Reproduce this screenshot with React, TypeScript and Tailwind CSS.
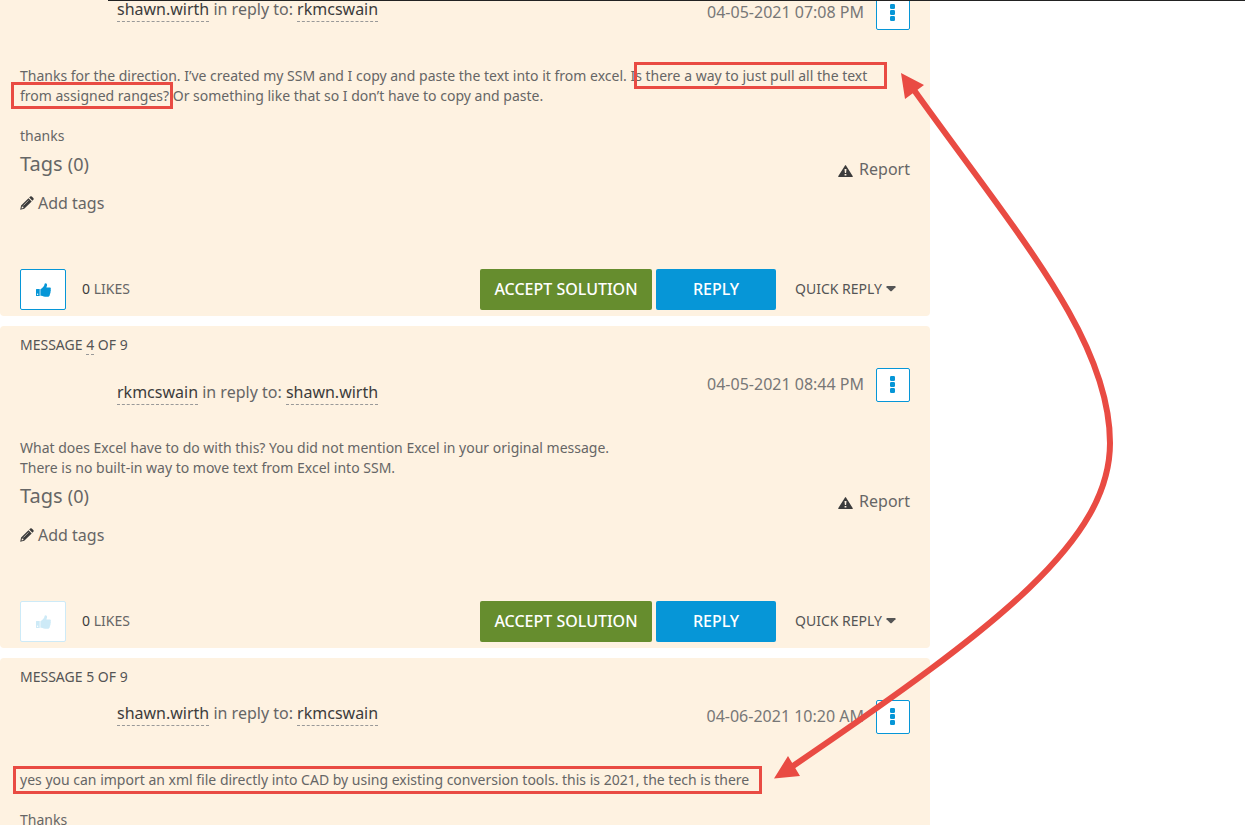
import React from 'react';
import clsx from 'clsx';

interface Message {
  id: number;
  author: string;
  replyTo: string;
  date: string;
  body: string;
  linked?: boolean;
  hideNumber?: boolean;
  hideFooter?: boolean;
  likeDisabled?: boolean;
}

const messages: Message[] = [
  {
    id: 3,
    author: 'shawn.wirth',
    replyTo: 'rkmcswain',
    date: '04-05-2021 07:08 PM',
    body: 'Thanks for the direction. I’ve created my SSM and I copy and paste the text into it from excel. Is there a way to just pull all the text\nfrom assigned ranges? Or something like that so I don’t have to copy and paste.\n\nthanks',
    hideNumber: true,
  },
  {
    id: 4,
    author: 'rkmcswain',
    replyTo: 'shawn.wirth',
    date: '04-05-2021 08:44 PM',
    body: 'What does Excel have to do with this? You did not mention Excel in your original message.\nThere is no built-in way to move text from Excel into SSM.',
    linked: true,
    likeDisabled: true,
  },
  {
    id: 5,
    author: 'shawn.wirth',
    replyTo: 'rkmcswain',
    date: '04-06-2021 10:20 AM',
    body: 'yes you can import an xml file directly into CAD by using existing conversion tools. this is 2021, the tech is there\n\nThanks',
    hideFooter: true,
  },
];

const ThumbIcon: React.FC = () => (
  <svg width="15" height="14" viewBox="0 0 15 14" fill="currentColor">
    <path
      fillRule="evenodd"
      d="M.5 6H3.7V13H.5Q0 13 0 12.5V6.5Q0 6 .5 6ZM1.6 10.6A.7.7 0 1 0 1.6 12A.7.7 0 1 0 1.6 10.6Z"
    />
    <path d="M4.4 6.2C6 5.6 7.6 4 8.2 2.6C8.5 1.7 8.5 .2 9.5 .2C10.8 .2 11.2 1.3 11 2.4C10.9 3.2 10.4 3.8 10.4 4.5H13.6C14.8 4.5 15.2 5.7 14.6 6.6C15 7.3 14.9 8.2 14.4 8.8C14.7 9.6 14.4 10.4 13.9 10.9C14 12.6 13.2 13.7 11.4 13.8C8.8 14 7 13.2 5.4 12.8L4.4 12.7Z" />
  </svg>
);

const WarningIcon: React.FC = () => (
  <svg className="mt-1 text-[#3c3c3c]" width="15" height="12" viewBox="0 0 15 12" fill="currentColor">
    <path
      fillRule="evenodd"
      d="M7 .4Q7.5-.3 8 .4L14.8 11.2Q15.1 12 14.3 12H.7Q-.1 12 .2 11.2ZM6.5 4L6.9 8H8.1L8.5 4ZM6.6 9V10.5H8.4V9Z"
    />
  </svg>
);

const PencilIcon: React.FC = () => (
  <svg className="text-[#3c3c3c]" width="14" height="14" viewBox="0 0 14 14" fill="currentColor">
    <path d="M9.2 1.5L10.2 .6Q11 -.1 11.8 .6L13.3 2.1Q14.1 3 13.3 3.8L12.4 4.7Z" />
    <path fillRule="evenodd" d="M8.5 2.2L11.7 5.4L4.2 12.8L.2 13.7L1.1 9.6ZM1.9 10.6L1.5 12.4L3.3 12L3.4 10.8Z" />
    <path d="M3.4 9.5L8.5 4.4" stroke="#fef2e1" strokeWidth=".6" />
  </svg>
);

const UserLink: React.FC<{ name: string }> = ({ name }) => (
  <a href="#" className="inline-block border-b border-dashed border-[#999] pb-px leading-[22px] text-[#3c3c3c]">
    {name}
  </a>
);

const MessageCard: React.FC<{ message: Message }> = ({ message }) => {
  const { id, author, replyTo, date, body, linked, hideNumber, hideFooter, likeDisabled } = message;

  return (
    <article className={clsx('rounded bg-[#fef2e1] px-5 pb-1.5', hideNumber ? '-mt-1' : 'pt-[9px]')}>
      {!hideNumber && (
        <p className="mb-[13px] text-sm text-[#555]">
          MESSAGE{' '}
          {linked ? (
            <a href="#" className="border-b border-dashed border-[#999]">
              {id}
            </a>
          ) : (
            id
          )}{' '}
          OF 9
        </p>
      )}

      <header className="flex h-[37px] items-start justify-between">
        <p className={clsx('pl-[97px] text-base leading-[22px]', linked ? 'self-end' : 'pt-0.5')}>
          <UserLink name={author} /> in reply to: <UserLink name={replyTo} />
        </p>
        <div className="flex items-center gap-3">
          <time className="pb-0.5 text-base text-[#777]">{date}</time>
          <button
            aria-label="Message options"
            className="flex h-[34px] w-[34px] items-center justify-center rounded-xs border border-[#0696d7] bg-white pr-0.5 pb-0.5 text-[#0696d7]"
          >
            <svg width="5" height="17" viewBox="0 0 5 17" fill="currentColor">
              <rect width="5" height="5" rx="1.2" />
              <rect y="6" width="5" height="5" rx="1.2" />
              <rect y="12" width="5" height="5" rx="1.2" />
            </svg>
          </button>
        </div>
      </header>

      <p className="mt-[33px] text-sm whitespace-pre-line">{body}</p>

      {!hideFooter && (
        <>
          <div className="flex h-[123px] items-start justify-between">
            <div>
              <h3 className="pt-0.5 text-xl leading-8">
                Tags <span className="text-lg">(0)</span>
              </h3>
              <button className="mt-[11px] flex items-center gap-1 text-base">
                <PencilIcon />
                Add tags
              </button>
            </div>
            <button className="mt-[11px] flex items-center gap-1.5 text-base">
              <WarningIcon />
              Report
            </button>
          </div>

          <footer className="flex items-center justify-between">
            <div className="flex items-center gap-4">
              <button
                aria-label="Like"
                disabled={likeDisabled}
                className={clsx(
                  'flex h-[41px] w-[46px] items-center justify-center rounded-xs border bg-white',
                  likeDisabled ? 'border-[#cdeaf7] text-[#cdeaf7]' : 'border-[#0696d7] text-[#0696d7]'
                )}
              >
                <ThumbIcon />
              </button>
              <span className="pb-0.5 text-sm">
                <span className="text-[#3c3c3c]">0</span> LIKES
              </span>
            </div>
            <div className="flex items-center gap-1">
              <button className="h-[41px] w-[172px] rounded-xs bg-[#668d2e] pb-0.5 text-base font-medium text-white">
                ACCEPT SOLUTION
              </button>
              <button className="h-[41px] w-[120px] rounded-xs bg-[#0696d7] pb-0.5 text-base font-medium text-white">
                REPLY
              </button>
              <button className="flex w-[130px] items-center gap-1 pb-0.5 pl-[15px] text-sm text-[#555]">
                QUICK REPLY
                <svg width="10" height="6" viewBox="0 0 10 6" fill="currentColor">
                  <path d="M1 0H9Q10 .3 9.5 1.2L6 4.8Q5 5.8 4 4.8L.5 1.2Q0 .3 1 0Z" />
                </svg>
              </button>
            </div>
          </footer>
        </>
      )}
    </article>
  );
};

// Red boxes and the arrow drawn over the thread
const Markup: React.FC = () => (
  <svg
    className="pointer-events-none absolute top-0 left-0"
    width="1245"
    height="825"
    viewBox="0 0 1245 825"
    fill="none"
    stroke="#e94b43"
  >
    <rect x="635.5" y="63.5" width="250" height="24" strokeWidth="3" />
    <rect x="12.5" y="83.5" width="159" height="24" strokeWidth="3" />
    <rect x="14.5" y="767.5" width="746" height="25" strokeWidth="3" />
    <path d="M914 90C1020 238 1110 340 1110 443C1110 540 1000 625 793 766" strokeWidth="6" />
    <path d="M901 73L924 85L905 99ZM774 778.5L788 756L800 776Z" fill="#e94b43" stroke="none" />
  </svg>
);

export default function App() {
  return (
    <main className="relative h-screen overflow-hidden bg-white font-['Noto_Sans',sans-serif] text-[#666]">
      <div className="flex max-w-[930px] flex-col gap-2.5">
        {messages.map((message) => (
          <MessageCard key={message.id} message={message} />
        ))}
      </div>
      <div className="absolute top-0 right-0 left-[108px] h-px bg-[#222]" />
      <Markup />
    </main>
  );
}
